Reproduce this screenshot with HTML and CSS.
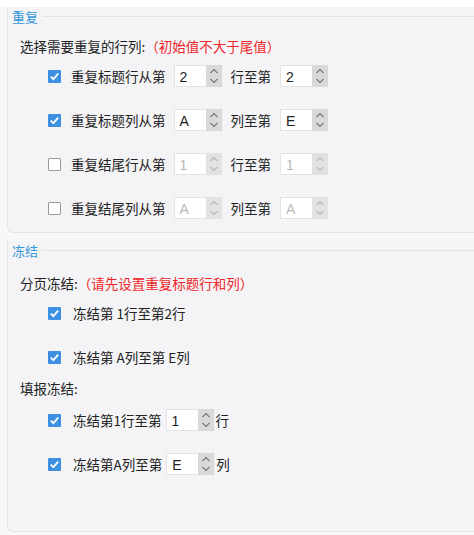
FILE: index.html
```html
<!DOCTYPE html>
<html lang="zh-CN">
<head>
    <meta charset="UTF-8">
    <title>重复与冻结</title>
    <link rel="stylesheet" href="styles.css">
</head>
<body>
    <div class="grupo grupo-repetir">
        <div class="leyenda"><span>重复</span><i></i></div>
        <div class="titulo">选择需要重复的行列:<span class="aviso">（初始值不大于尾值）</span></div>

        <div class="filas">
            <div class="fila">
                <span class="check activo"></span>
                <span class="texto">重复标题行从第</span>
                <span class="spin"><span class="valor">2</span><span class="flechas"><svg viewBox="0 0 16 22"><polyline points="4.5,8 8,4.5 11.5,8"/><polyline points="4.5,14 8,17.5 11.5,14"/></svg></span></span>
                <span class="texto medio">行至第</span>
                <span class="spin"><span class="valor">2</span><span class="flechas"><svg viewBox="0 0 16 22"><polyline points="4.5,8 8,4.5 11.5,8"/><polyline points="4.5,14 8,17.5 11.5,14"/></svg></span></span>
            </div>
            <div class="fila">
                <span class="check activo"></span>
                <span class="texto">重复标题列从第</span>
                <span class="spin"><span class="valor">A</span><span class="flechas"><svg viewBox="0 0 16 22"><polyline points="4.5,8 8,4.5 11.5,8"/><polyline points="4.5,14 8,17.5 11.5,14"/></svg></span></span>
                <span class="texto medio">列至第</span>
                <span class="spin"><span class="valor">E</span><span class="flechas"><svg viewBox="0 0 16 22"><polyline points="4.5,8 8,4.5 11.5,8"/><polyline points="4.5,14 8,17.5 11.5,14"/></svg></span></span>
            </div>
            <div class="fila">
                <span class="check"></span>
                <span class="texto">重复结尾行从第</span>
                <span class="spin apagado"><span class="valor">1</span><span class="flechas"><svg viewBox="0 0 16 22"><polyline points="4.5,8 8,4.5 11.5,8"/><polyline points="4.5,14 8,17.5 11.5,14"/></svg></span></span>
                <span class="texto medio">行至第</span>
                <span class="spin apagado"><span class="valor">1</span><span class="flechas"><svg viewBox="0 0 16 22"><polyline points="4.5,8 8,4.5 11.5,8"/><polyline points="4.5,14 8,17.5 11.5,14"/></svg></span></span>
            </div>
            <div class="fila">
                <span class="check"></span>
                <span class="texto">重复结尾列从第</span>
                <span class="spin apagado"><span class="valor">A</span><span class="flechas"><svg viewBox="0 0 16 22"><polyline points="4.5,8 8,4.5 11.5,8"/><polyline points="4.5,14 8,17.5 11.5,14"/></svg></span></span>
                <span class="texto medio">列至第</span>
                <span class="spin apagado"><span class="valor">A</span><span class="flechas"><svg viewBox="0 0 16 22"><polyline points="4.5,8 8,4.5 11.5,8"/><polyline points="4.5,14 8,17.5 11.5,14"/></svg></span></span>
            </div>
        </div>
    </div>

    <div class="grupo grupo-congelar">
        <div class="leyenda"><span>冻结</span><i></i></div>
        <div class="titulo t-pagina">分页冻结:<span class="aviso">（请先设置重复标题行和列）</span></div>

        <div class="filas">
            <div class="fila">
                <span class="check activo"></span>
                <span class="texto ancho">冻结第 1行至第2行</span>
            </div>
            <div class="fila">
                <span class="check activo"></span>
                <span class="texto ancho">冻结第 A列至第 E列</span>
            </div>
        </div>

        <div class="titulo t-relleno">填报冻结:</div>

        <div class="filas f-relleno">
            <div class="fila">
                <span class="check activo"></span>
                <span class="texto ancho">冻结第1行至第</span>
                <span class="spin corto"><span class="valor">1</span><span class="flechas"><svg viewBox="0 0 16 22"><polyline points="4.5,8 8,4.5 11.5,8"/><polyline points="4.5,14 8,17.5 11.5,14"/></svg></span></span>
                <span class="texto fin">行</span>
            </div>
            <div class="fila">
                <span class="check activo"></span>
                <span class="texto ancho">冻结第A列至第</span>
                <span class="spin corto"><span class="valor">E</span><span class="flechas"><svg viewBox="0 0 16 22"><polyline points="4.5,8 8,4.5 11.5,8"/><polyline points="4.5,14 8,17.5 11.5,14"/></svg></span></span>
                <span class="texto fin">列</span>
            </div>
        </div>
    </div>
</body>
</html>
```

FILE: styles.css
```css
* {
    box-sizing: border-box;
}
body {
    margin: 0;
    width: 474px;
    height: 535px;
    overflow: hidden;
    padding-top: 7px;
    background: linear-gradient(#ffffff 7px, #f8f8fa 7px);
    font-family: "Noto Sans CJK SC", "Noto Sans", sans-serif;
    font-size: 13.5px;
    color: #222222;
}
.grupo {
    margin-left: 7px;
    background-color: #f4f4f6;
    border: 1px solid #e4e4e8;
    border-top: none;
    border-right: none;
    border-radius: 0 0 0 6px;
}
.grupo-repetir {
    height: 226px;
}
.grupo-congelar {
    margin-top: 8px;
    height: 291px;
}
.leyenda {
    display: flex;
    align-items: center;
    height: 19px;
    padding-left: 4px;
    font-size: 13px;
    color: #3597dc;
}
.leyenda span {
    line-height: 19px;
    margin-right: 4px;
}
.leyenda i {
    flex: 1;
    border-top: 1px solid #e2e2e6;
}
.titulo {
    height: 20px;
    line-height: 20px;
    margin-top: 10px;
    padding-left: 12px;
    white-space: nowrap;
}
.aviso {
    color: #f0262a;
}
.t-pagina {
    margin-top: 13px;
}
.t-relleno {
    margin-top: 10px;
}
.filas {
    display: flex;
    flex-direction: column;
    gap: 22px;
    margin-top: 9px;
    padding-left: 40px;
}
.f-relleno {
    margin-top: 11px;
}
.fila {
    display: flex;
    align-items: center;
    height: 22px;
    white-space: nowrap;
}
.check {
    width: 13px;
    height: 13px;
    flex: none;
    background-color: #ffffff;
    border: 1px solid #9a9a9a;
    border-radius: 1px;
}
.check.activo {
    border: none;
    background-color: #3d8fe2;
    background-image: url("data:image/svg+xml,%3Csvg xmlns='http://www.w3.org/2000/svg' viewBox='0 0 13 13'%3E%3Cpolyline points='2.8,6.6 5.4,9.2 10.2,3.6' fill='none' stroke='white' stroke-width='1.8'/%3E%3C/svg%3E");
}
.texto {
    margin-left: 10px;
    line-height: 22px;
}
.texto.ancho {
    margin-left: 12px;
}
.texto.medio {
    margin-left: 9px;
    margin-right: 9px;
}
.texto.fin {
    margin-left: 2px;
}
.spin {
    display: flex;
    height: 22px;
    margin-left: 8px;
}
.spin.corto {
    margin-left: 4px;
}
.texto.medio + .spin {
    margin-left: 0;
}
.valor {
    width: 32px;
    height: 22px;
    padding-left: 5px;
    line-height: 22px;
    font-family: "Liberation Sans", sans-serif;
    font-size: 14px;
    background-color: #ffffff;
    border: 1px solid #e3e3e3;
    border-right: none;
    color: #222222;
}
.flechas {
    width: 16px;
    height: 22px;
    background-color: #d9d9d9;
}
.flechas svg {
    display: block;
    width: 16px;
    height: 22px;
}
.flechas polyline {
    fill: none;
    stroke: #767676;
    stroke-width: 1.1;
}
.apagado .valor {
    color: #b8b8b8;
}
.apagado .flechas {
    background-color: #e2e2e2;
}
.apagado .flechas polyline {
    stroke: #b8b8b8;
}
```
